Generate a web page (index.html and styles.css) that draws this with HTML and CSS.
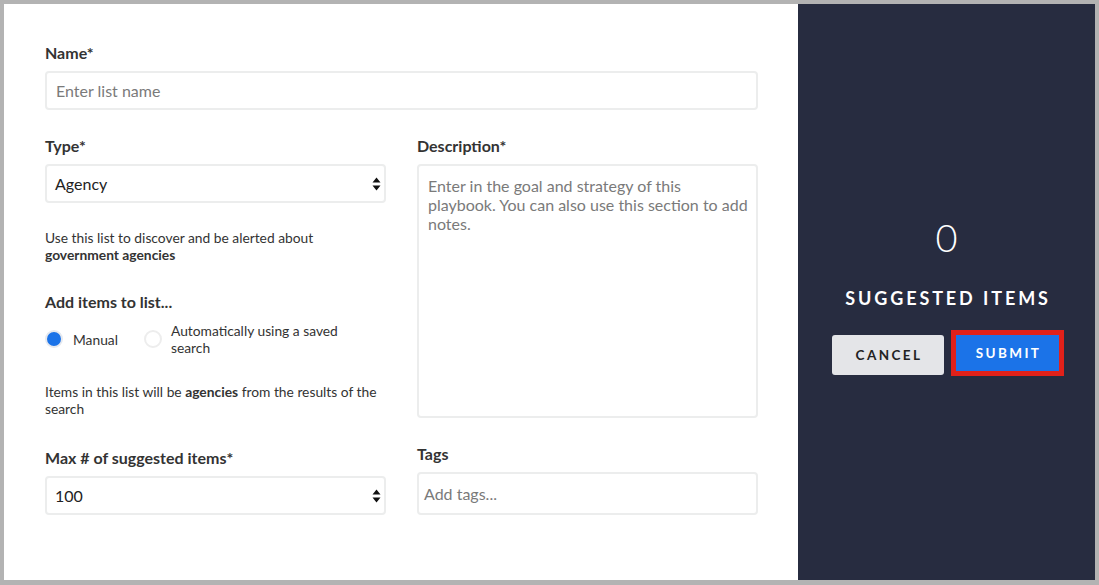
FILE: index.html
```html
<!DOCTYPE html>
<html lang="en">
<head>
<meta charset="utf-8">
<title>New list</title>
<link rel="stylesheet" href="styles.css">
</head>
<body>
<div class="modal">
  <form class="form">
    <div class="field">
      <label class="label" for="list-name">Name*</label>
      <div class="input input-name"><span class="placeholder">Enter list name</span></div>
    </div>

    <div class="columns">
      <div class="col">
        <div class="field">
          <label class="label">Type*</label>
          <div class="input select">
            <span class="value">Agency</span>
            <svg class="arrows" width="9" height="14" viewBox="0 0 9 14"><path d="M4.5 0.5 L8.5 5.5 H0.5 Z M4.5 13.5 L8.5 8.5 H0.5 Z" fill="#111"/></svg>
          </div>
        </div>
        <p class="help help-type">Use this list to discover and be alerted about <b>government agencies</b></p>

        <div class="label label-add">Add items to list...</div>
        <div class="radios">
          <div class="radio-opt">
            <span class="radio checked"></span>
            <span class="radio-text">Manual</span>
          </div>
          <div class="radio-opt">
            <span class="radio"></span>
            <span class="radio-text">Automatically using a saved search</span>
          </div>
        </div>
        <p class="help help-items">Items in this list will be <b>agencies</b> from the results of the search</p>

        <div class="field field-max">
          <label class="label">Max # of suggested items*</label>
          <div class="input select">
            <span class="value">100</span>
            <svg class="arrows" width="9" height="14" viewBox="0 0 9 14"><path d="M4.5 0.5 L8.5 5.5 H0.5 Z M4.5 13.5 L8.5 8.5 H0.5 Z" fill="#111"/></svg>
          </div>
        </div>
      </div>

      <div class="col">
        <div class="field">
          <label class="label">Description*</label>
          <div class="input textarea"><span class="placeholder">Enter in the goal and strategy of this playbook. You can also use this section to add notes.</span></div>
        </div>
        <div class="field field-tags">
          <label class="label">Tags</label>
          <div class="input input-tags"><span class="placeholder">Add tags...</span></div>
        </div>
      </div>
    </div>
  </form>

  <aside class="summary">
    <div class="count">0</div>
    <div class="count-label">SUGGESTED ITEMS</div>
    <div class="actions">
      <button type="button" class="btn btn-cancel">CANCEL</button>
      <button type="button" class="btn btn-submit">SUBMIT</button>
    </div>
  </aside>
</div>
</body>
</html>
```

FILE: styles.css
```css
* {
  box-sizing: border-box;
}

html, body {
  margin: 0;
  padding: 0;
}

body {
  background: #b3b3b3;
  font-family: Lato, "Open Sans", "Liberation Sans", sans-serif;
  color: #333;
  width: 1099px;
  height: 585px;
  overflow: hidden;
  padding: 4px 4px 5px 4px;
}

.modal {
  display: flex;
  width: 1091px;
  height: 576px;
  background: #fff;
}

/* ---------- form side ---------- */

.form {
  width: 794px;
  padding: 39px 40px 0 41px;
}

.field {
  display: flex;
  flex-direction: column;
}

.label {
  display: block;
  font-size: 16px;
  font-weight: 700;
  line-height: 20px;
  color: #333;
  margin-bottom: 8px;
}

.input {
  border: 2px solid #eceded;
  border-radius: 4px;
  background: #fff;
  font-size: 16px;
  line-height: 19px;
  display: flex;
  align-items: center;
}

.input-name {
  height: 39px;
  padding: 0 9px;
}

.placeholder {
  color: #7a7a7a;
}

.value {
  color: #222;
}

.columns {
  display: grid;
  grid-template-columns: 341px 341px;
  column-gap: 31px;
  margin-top: 26px;
}

.col {
  display: flex;
  flex-direction: column;
}

.select {
  height: 39px;
  padding: 0 3px 0 8px;
  justify-content: space-between;
}

.help {
  margin: 0;
  font-size: 13.8px;
  line-height: 17px;
  color: #333;
}

.help b {
  font-weight: 700;
}

.help-type {
  margin-top: 26px;
  padding-right: 40px;
}

.label-add {
  margin-top: 29px;
  margin-bottom: 10px;
}

.radios {
  display: flex;
  align-items: center;
  gap: 26px;
}

.radio-opt {
  display: flex;
  align-items: center;
  gap: 10px;
}

.radio-opt + .radio-opt {
  gap: 9px;
}

.radio {
  width: 18px;
  height: 18px;
  border-radius: 50%;
  border: 2px solid #ededed;
  background: #fff;
  flex: none;
}

.radio.checked {
  background: #1b73e8;
  border: 2px solid #e6e9ef;
}

.radio-text {
  font-size: 13.8px;
  line-height: 17px;
  color: #333;
}

.radio-opt + .radio-opt .radio-text {
  width: 190px;
}

.help-items {
  margin-top: 27px;
}

.field-max {
  margin-top: 31px;
}

.textarea {
  height: 254px;
  align-items: flex-start;
  padding: 10px 4px 10px 9px;
}

.field-tags {
  margin-top: 26px;
}

.input-tags {
  height: 43px;
  padding: 0 5px;
}

/* ---------- summary side ---------- */

.summary {
  width: 297px;
  background: #272c40;
  color: #fff;
  display: flex;
  flex-direction: column;
  align-items: center;
  padding-top: 211px;
}

.count {
  font-size: 38px;
  font-weight: 300;
  line-height: 44px;
}

.count-label {
  margin-top: 28px;
  font-size: 18px;
  font-weight: 700;
  letter-spacing: 2.9px;
  line-height: 22px;
  padding-left: 3px;
}

.actions {
  display: flex;
  align-items: flex-start;
  gap: 7px;
  margin-top: 26px;
  padding-left: 3px;
}

.btn {
  font-family: Lato, "Open Sans", "Liberation Sans", sans-serif;
  font-size: 13.5px;
  font-weight: 700;
  letter-spacing: 2.4px;
  border-radius: 3px;
  cursor: pointer;
}

.btn-cancel {
  width: 112px;
  height: 40px;
  border: none;
  background: #e4e5e8;
  color: #222;
  padding: 0 0 0 2px;
}

.btn-submit {
  width: 113px;
  height: 46px;
  border: 5px solid #e1211a;
  border-radius: 0;
  background: #1b73e8;
  color: #fff;
  padding: 0 0 0 2px;
  margin-top: -5px;
}
```
